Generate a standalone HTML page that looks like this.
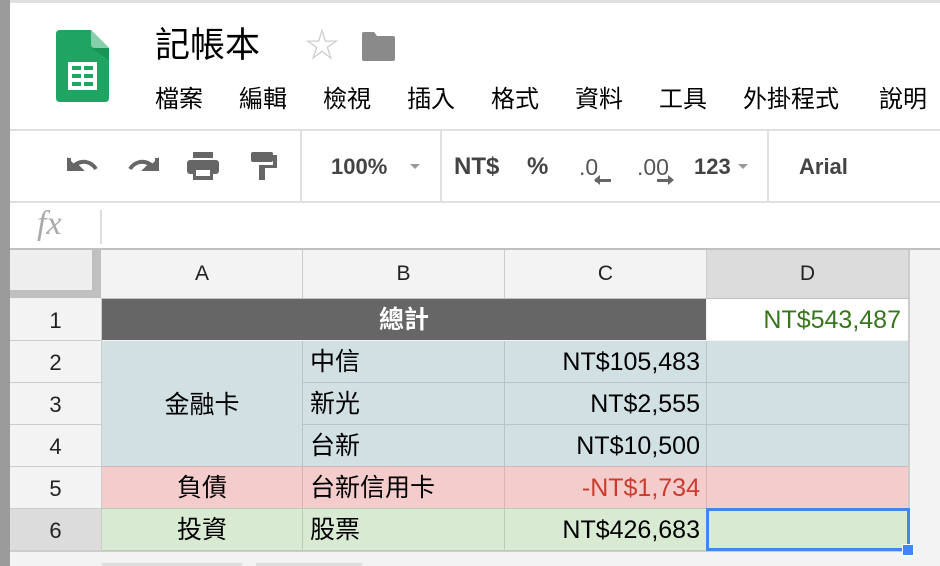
<!DOCTYPE html><html><head><meta charset="utf-8"><style>
*{margin:0;padding:0;box-sizing:border-box}
body{width:940px;height:566px;overflow:hidden;background:#fff;position:relative;font-family:"Liberation Sans","Noto Sans CJK TC",sans-serif}
.a{position:absolute}
.m{position:absolute;top:85px;font-size:24px;color:#000;line-height:30px}
.tb{position:absolute;top:153px;font-size:21px;font-weight:bold;color:#444;line-height:28px}
.c{position:absolute;font-size:25px;line-height:43px;white-space:nowrap;overflow:hidden}
.hd{position:absolute;font-size:21px;color:#222;text-align:center;line-height:48px}
.rh{position:absolute;left:10px;width:91px;font-size:22px;color:#222;text-align:center;line-height:43px;background:#f3f3f3}
</style></head><body>
<div class="a" style="left:0;top:0;width:940px;height:3px;background:#e0e0e0"></div>
<div class="a" style="left:0;top:0;width:10px;height:566px;background:#9b9b9b"></div>
<svg class="a" style="left:56px;top:30px" width="53" height="72" viewBox="0 0 53 72"><path d="M4 0H35L53 18V68Q53 72 49 72H4Q0 72 0 68V4Q0 0 4 0Z" fill="#1fa463"/><path d="M35 0L53 18H39Q35 18 35 14Z" fill="#87ceac"/><path d="M35 18H53V30Z" fill="#168a50" opacity=".6"/><rect x="12" y="32" width="29" height="28" fill="#fff"/><g fill="#1fa463"><rect x="16" y="36" width="9" height="4"/><rect x="28" y="36" width="9" height="4"/><rect x="16" y="44" width="9" height="4"/><rect x="28" y="44" width="9" height="4"/><rect x="16" y="52" width="9" height="4"/><rect x="28" y="52" width="9" height="4"/></g></svg>
<div class="a" style="left:155px;top:24px;font-size:35px;line-height:44px">記帳本</div>
<div class="a" style="left:305px;top:26px;font-size:34px;color:#ccc;line-height:40px">☆</div>
<svg class="a" style="left:362px;top:32px" width="33" height="29" viewBox="0 0 33 29"><path d="M2 0H12L15 4H31Q33 4 33 6V27Q33 29 31 29H2Q0 29 0 27V2Q0 0 2 0Z" fill="#8a8a8a"/></svg>
<div class="m" style="left:155px">檔案</div><div class="m" style="left:239px">編輯</div><div class="m" style="left:323px">檢視</div><div class="m" style="left:407px">插入</div><div class="m" style="left:491px">格式</div><div class="m" style="left:575px">資料</div><div class="m" style="left:659px">工具</div><div class="m" style="left:743px">外掛程式</div><div class="m" style="left:879px">說明</div>
<div class="a" style="left:10px;top:129px;width:930px;height:2px;background:#e0e0e0"></div>
<div class="a" style="left:10px;top:201px;width:930px;height:2px;background:#e0e0e0"></div>
<div class="a" style="left:300px;top:131px;width:2px;height:70px;background:#e0e0e0"></div>
<div class="a" style="left:440px;top:131px;width:2px;height:70px;background:#e0e0e0"></div>
<div class="a" style="left:767px;top:131px;width:2px;height:70px;background:#e0e0e0"></div>
<svg class="a" style="left:66px;top:155px" width="34" height="20" viewBox="0 0 34 20"><path d="M3 3V14H14L9.5 9.5C16 5 25 6 30 14" fill="none" stroke="#666" stroke-width="4"/><path d="M1 2V16H15Z" fill="#666"/></svg>
<svg class="a" style="left:126px;top:155px" width="34" height="20" viewBox="0 0 34 20"><path d="M31 3V14H20L24.5 9.5C18 5 9 6 4 14" fill="none" stroke="#666" stroke-width="4"/><path d="M33 2V16H19Z" fill="#666"/></svg>
<svg class="a" style="left:187px;top:152px" width="32" height="28" viewBox="0 0 32 28"><rect x="6" y="0" width="20" height="6" fill="#666"/><rect x="0" y="8" width="32" height="14" rx="3" fill="#666"/><rect x="6" y="17" width="20" height="11" fill="#666"/><rect x="9" y="18" width="14" height="6" fill="#fff"/></svg>
<svg class="a" style="left:251px;top:152px" width="26" height="28" viewBox="0 0 26 28"><rect x="0" y="0" width="22" height="10" rx="2" fill="#666"/><rect x="22" y="3" width="4" height="12" fill="#666"/><rect x="12" y="13" width="14" height="3" fill="#666"/><rect x="8" y="13" width="6" height="15" fill="#666"/></svg>
<div class="tb" style="left:331px;font-size:22px">100%</div>
<div class="a" style="left:410px;top:164px;border:5px solid transparent;border-top:5px solid #999"></div>
<div class="tb" style="left:454px;font-size:24px">NT$</div>
<div class="tb" style="left:527px;font-size:24px">%</div>
<div class="tb" style="left:579px;font-weight:normal;color:#555;font-size:23px">.0</div>
<div class="a" style="left:595px;top:179px;width:16px;height:3px;background:#666"></div><div class="a" style="left:594px;top:175px;border:5px solid transparent;border-right:6px solid #666;border-left:0"></div>
<div class="tb" style="left:637px;font-weight:normal;color:#555;font-size:23px">.00</div>
<div class="a" style="left:657px;top:179px;width:12px;height:3px;background:#666"></div><div class="a" style="left:668px;top:175px;border:5px solid transparent;border-left:6px solid #666;border-right:0"></div>
<div class="tb" style="left:694px;font-size:22px">123</div>
<div class="a" style="left:738px;top:164px;border:5px solid transparent;border-top:5px solid #999"></div>
<div class="tb" style="left:799px;font-size:22px">Arial</div>
<div class="a" style="left:37px;top:204px;font-family:'Liberation Serif',serif;font-style:italic;font-size:34px;color:#aaa;line-height:40px">fx</div>
<div class="a" style="left:100px;top:210px;width:2px;height:34px;background:#ddd"></div>
<div class="a" style="left:10px;top:248px;width:930px;height:2px;background:#c0c0c0"></div>
<div class="a" style="left:10px;top:250px;width:930px;height:316px;background:#f3f3f3"></div>
<div class="a" style="left:10px;top:250px;width:82px;height:40px;background:#eee"></div>
<div class="a" style="left:92px;top:250px;width:9px;height:48px;background:#c0c0c0"></div>
<div class="a" style="left:10px;top:290px;width:91px;height:8px;background:#c0c0c0"></div>
<div class="hd" style="left:102px;top:250px;width:200px;background:#f3f3f3">A</div>
<div class="hd" style="left:303px;top:250px;width:201px;background:#f3f3f3">B</div>
<div class="hd" style="left:505px;top:250px;width:201px;background:#f3f3f3">C</div>
<div class="hd" style="left:707px;top:250px;width:201px;background:#dcdcdc">D</div>
<div class="a" style="left:302px;top:250px;width:1px;height:48px;background:#ccc"></div>
<div class="a" style="left:504px;top:250px;width:1px;height:48px;background:#ccc"></div>
<div class="a" style="left:706px;top:250px;width:1px;height:48px;background:#ccc"></div>
<div class="a" style="left:908px;top:250px;width:2px;height:301px;background:#ccc"></div>
<div class="a" style="left:101px;top:298px;width:808px;height:1px;background:#c0c0c0"></div>
<div class="rh" style="top:299px">1</div>
<div class="rh" style="top:341px">2</div>
<div class="rh" style="top:383px">3</div>
<div class="rh" style="top:425px">4</div>
<div class="rh" style="top:467px">5</div>
<div class="rh" style="top:509px;background:#dcdcdc;height:41px">6</div>
<div class="a" style="left:10px;top:340px;width:91px;height:1px;background:#ccc"></div>
<div class="a" style="left:10px;top:382px;width:91px;height:1px;background:#ccc"></div>
<div class="a" style="left:10px;top:424px;width:91px;height:1px;background:#ccc"></div>
<div class="a" style="left:10px;top:466px;width:91px;height:1px;background:#ccc"></div>
<div class="a" style="left:10px;top:508px;width:91px;height:1px;background:#ccc"></div>
<div class="a" style="left:101px;top:299px;width:1px;height:252px;background:#ccc"></div>
<div class="a" style="left:10px;top:550px;width:899px;height:2px;background:#ccc"></div>
<div class="c" style="left:102px;top:299px;width:604px;height:41px;background:#666;color:#fff;text-align:center;font-weight:bold">總計</div>
<div class="c" style="left:707px;top:299px;width:201px;height:41px;background:#fff;color:#38761d;text-align:right;padding-right:7px">NT$543,487</div>
<div class="a" style="left:102px;top:341px;width:806px;height:125px;background:#b7c4c8"></div>
<div class="c" style="left:102px;top:341px;width:200px;height:125px;background:#d0e0e3;text-align:center;line-height:128px">金融卡</div>
<div class="c" style="left:303px;top:341px;width:201px;height:41px;background:#d0e0e3;padding-left:7px">中信</div>
<div class="c" style="left:303px;top:383px;width:201px;height:41px;background:#d0e0e3;padding-left:7px">新光</div>
<div class="c" style="left:303px;top:425px;width:201px;height:41px;background:#d0e0e3;padding-left:7px">台新</div>
<div class="c" style="left:505px;top:341px;width:201px;height:41px;background:#d0e0e3;text-align:right;padding-right:6px">NT$105,483</div>
<div class="c" style="left:505px;top:383px;width:201px;height:41px;background:#d0e0e3;text-align:right;padding-right:6px">NT$2,555</div>
<div class="c" style="left:505px;top:425px;width:201px;height:41px;background:#d0e0e3;text-align:right;padding-right:6px">NT$10,500</div>
<div class="c" style="left:707px;top:341px;width:201px;height:41px;background:#d0e0e3"></div>
<div class="c" style="left:707px;top:383px;width:201px;height:41px;background:#d0e0e3"></div>
<div class="c" style="left:707px;top:425px;width:201px;height:41px;background:#d0e0e3"></div>
<div class="a" style="left:102px;top:466px;width:806px;height:42px;background:#d9b3b3"></div>
<div class="c" style="left:102px;top:467px;width:200px;height:41px;background:#f4cccc;text-align:center">負債</div>
<div class="c" style="left:303px;top:467px;width:201px;height:41px;background:#f4cccc;padding-left:7px">台新信用卡</div>
<div class="c" style="left:505px;top:467px;width:201px;height:41px;background:#f4cccc;color:#cc3b2e;text-align:right;padding-right:6px">-NT$1,734</div>
<div class="c" style="left:707px;top:467px;width:201px;height:41px;background:#f4cccc"></div>
<div class="a" style="left:102px;top:508px;width:806px;height:43px;background:#bccbb8"></div>
<div class="c" style="left:102px;top:509px;width:200px;height:41px;background:#d9ead3;text-align:center">投資</div>
<div class="c" style="left:303px;top:509px;width:201px;height:41px;background:#d9ead3;padding-left:7px">股票</div>
<div class="c" style="left:505px;top:509px;width:201px;height:41px;background:#d9ead3;text-align:right;padding-right:6px">NT$426,683</div>
<div class="a" style="left:706px;top:508px;width:204px;height:43px;background:#d9ead3;border:3px solid #4285f4"></div>
<div class="a" style="left:902px;top:544px;width:12px;height:12px;background:#4285f4;border:1px solid #fff"></div>
<div class="a" style="left:102px;top:563px;width:140px;height:3px;background:#ddd"></div>
<div class="a" style="left:256px;top:563px;width:106px;height:3px;background:#ddd"></div>
</body></html>
